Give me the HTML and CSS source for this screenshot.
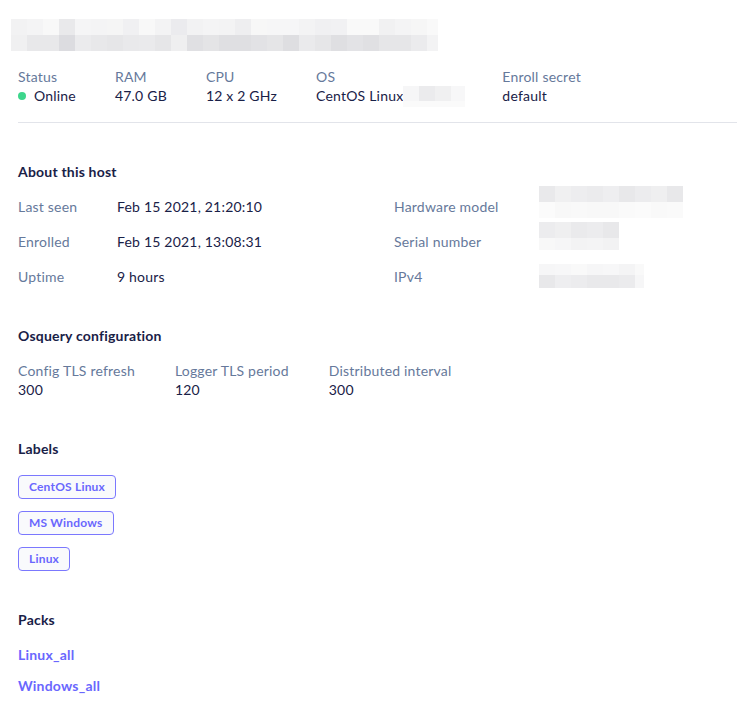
FILE: index.html
```html
<!DOCTYPE html>
<html>
<head>
<meta charset="utf-8">
<link rel="stylesheet" href="styles.css">
</head>
<body>
<div class="page">
  <div class="title-blur">
    <svg width="427" height="32" viewBox="0 0 427 32">
      <g>
        <rect x="0" y="0" width="16" height="16" fill="#f2f2f3"/>
        <rect x="16" y="0" width="16" height="16" fill="#f4f4f5"/>
        <rect x="32" y="0" width="16" height="16" fill="#f8f8f8"/>
        <rect x="48" y="0" width="16" height="16" fill="#e9e9eb"/>
        <rect x="64" y="0" width="16" height="16" fill="#f5f5f6"/>
        <rect x="80" y="0" width="16" height="16" fill="#f4f4f5"/>
        <rect x="96" y="0" width="16" height="16" fill="#f5f5f5"/>
        <rect x="112" y="0" width="16" height="16" fill="#f0f0f2"/>
        <rect x="128" y="0" width="16" height="16" fill="#f8f8f8"/>
        <rect x="144" y="0" width="16" height="16" fill="#f3f3f4"/>
        <rect x="160" y="0" width="16" height="16" fill="#ebebee"/>
        <rect x="176" y="0" width="16" height="16" fill="#f2f2f3"/>
        <rect x="192" y="0" width="16" height="16" fill="#f4f4f5"/>
        <rect x="208" y="0" width="16" height="16" fill="#f3f3f4"/>
        <rect x="224" y="0" width="16" height="16" fill="#eeeef0"/>
        <rect x="240" y="0" width="16" height="16" fill="#f7f7f7"/>
        <rect x="256" y="0" width="16" height="16" fill="#f6f6f7"/>
        <rect x="272" y="0" width="16" height="16" fill="#f6f6f7"/>
        <rect x="288" y="0" width="16" height="16" fill="#f3f3f4"/>
        <rect x="304" y="0" width="16" height="16" fill="#f0f0f2"/>
        <rect x="320" y="0" width="16" height="16" fill="#f1f1f3"/>
        <rect x="336" y="0" width="16" height="16" fill="#f9f9f9"/>
        <rect x="352" y="0" width="16" height="16" fill="#f9f9f9"/>
        <rect x="368" y="0" width="16" height="16" fill="#f1f1f2"/>
        <rect x="384" y="0" width="16" height="16" fill="#f4f4f5"/>
        <rect x="400" y="0" width="16" height="16" fill="#f6f6f6"/>
        <rect x="416" y="0" width="11" height="16" fill="#f9f9f9"/>
      </g>
      <g>
        <rect x="0" y="16" width="16" height="16" fill="#f0f0f1"/>
        <rect x="16" y="16" width="16" height="16" fill="#e8e8ea"/>
        <rect x="32" y="16" width="16" height="16" fill="#e8e8ea"/>
        <rect x="48" y="16" width="16" height="16" fill="#dcdce0"/>
        <rect x="64" y="16" width="16" height="16" fill="#ebebed"/>
        <rect x="80" y="16" width="16" height="16" fill="#e8e8ea"/>
        <rect x="96" y="16" width="16" height="16" fill="#e6e6e8"/>
        <rect x="112" y="16" width="16" height="16" fill="#e9e9eb"/>
        <rect x="128" y="16" width="16" height="16" fill="#eaeaec"/>
        <rect x="144" y="16" width="16" height="16" fill="#e6e6e8"/>
        <rect x="160" y="16" width="16" height="16" fill="#efeff0"/>
        <rect x="176" y="16" width="16" height="16" fill="#e0e0e3"/>
        <rect x="192" y="16" width="16" height="16" fill="#e4e4e6"/>
        <rect x="208" y="16" width="16" height="16" fill="#dfdfe2"/>
        <rect x="224" y="16" width="16" height="16" fill="#dfdfe2"/>
        <rect x="240" y="16" width="16" height="16" fill="#e2e2e5"/>
        <rect x="256" y="16" width="16" height="16" fill="#e5e5e7"/>
        <rect x="272" y="16" width="16" height="16" fill="#dedee1"/>
        <rect x="288" y="16" width="16" height="16" fill="#eaeaec"/>
        <rect x="304" y="16" width="16" height="16" fill="#e6e6e8"/>
        <rect x="320" y="16" width="16" height="16" fill="#dfdfe2"/>
        <rect x="336" y="16" width="16" height="16" fill="#e3e3e6"/>
        <rect x="352" y="16" width="16" height="16" fill="#e0e0e3"/>
        <rect x="368" y="16" width="16" height="16" fill="#e6e6e8"/>
        <rect x="384" y="16" width="16" height="16" fill="#e6e6e8"/>
        <rect x="400" y="16" width="16" height="16" fill="#ebebed"/>
        <rect x="416" y="16" width="11" height="16" fill="#f3f3f4"/>
      </g>
    </svg>
  </div>

  <div class="stats">
    <div class="stat">
      <div class="label">Status</div>
      <div class="value"><span class="dot"></span>Online</div>
    </div>
    <div class="stat">
      <div class="label">RAM</div>
      <div class="value">47.0 GB</div>
    </div>
    <div class="stat">
      <div class="label">CPU</div>
      <div class="value">12 x 2 GHz</div>
    </div>
    <div class="stat">
      <div class="label">OS</div>
      <div class="value os-value">CentOS Linux<svg class="os-blur" width="62" height="21" viewBox="0 0 62 21">
        <rect x="0" y="0" width="16" height="21" fill="#f6f6f7"/>
        <rect x="16" y="0" width="16" height="21" fill="#ebebed"/>
        <rect x="32" y="0" width="16" height="21" fill="#f0f0f1"/>
        <rect x="48" y="0" width="14" height="21" fill="#f7f7f8"/>
        <rect x="0" y="15" width="62" height="6" fill="#fafafa"/>
      </svg></div>
    </div>
    <div class="stat">
      <div class="label">Enroll secret</div>
      <div class="value">default</div>
    </div>
  </div>

  <section class="section first">
    <h2 class="heading">About this host</h2>
    <div class="about">
      <div class="label">Last seen</div>
      <div class="value">Feb 15 2021, 21:20:10</div>
      <div class="label">Hardware model</div>
      <div class="value">
        <svg class="blur blur-hw" width="144" height="32" viewBox="0 0 144 32">
          <rect x="0" y="0" width="16" height="16" fill="#e9e9eb"/>
          <rect x="16" y="0" width="16" height="16" fill="#f0f0f1"/>
          <rect x="32" y="0" width="16" height="16" fill="#ededef"/>
          <rect x="48" y="0" width="16" height="16" fill="#ebebed"/>
          <rect x="64" y="0" width="16" height="16" fill="#eeeef0"/>
          <rect x="80" y="0" width="16" height="16" fill="#e8e8ea"/>
          <rect x="96" y="0" width="16" height="16" fill="#ececee"/>
          <rect x="112" y="0" width="16" height="16" fill="#efeff0"/>
          <rect x="128" y="0" width="16" height="16" fill="#e8e8ea"/>
          <rect x="0" y="16" width="16" height="16" fill="#fbfbfb"/>
          <rect x="16" y="16" width="16" height="16" fill="#f8f8f8"/>
          <rect x="32" y="16" width="16" height="16" fill="#f9f9f9"/>
          <rect x="48" y="16" width="16" height="16" fill="#f8f8f8"/>
          <rect x="64" y="16" width="16" height="16" fill="#f8f8f8"/>
          <rect x="80" y="16" width="16" height="16" fill="#fafafa"/>
          <rect x="96" y="16" width="16" height="16" fill="#fbfbfb"/>
          <rect x="112" y="16" width="16" height="16" fill="#f9f9f9"/>
          <rect x="128" y="16" width="16" height="16" fill="#fafafa"/>
        </svg>
      </div>
      <div class="label">Enrolled</div>
      <div class="value">Feb 15 2021, 13:08:31</div>
      <div class="label">Serial number</div>
      <div class="value">
        <svg class="blur blur-sn" width="80" height="28" viewBox="0 0 80 28">
          <rect x="0" y="0" width="16" height="16" fill="#ececee"/>
          <rect x="16" y="0" width="16" height="16" fill="#efeff0"/>
          <rect x="32" y="0" width="16" height="16" fill="#eaeaec"/>
          <rect x="48" y="0" width="16" height="16" fill="#ececee"/>
          <rect x="64" y="0" width="16" height="16" fill="#e8e8ea"/>
          <rect x="0" y="16" width="16" height="12" fill="#f8f8f8"/>
          <rect x="16" y="16" width="16" height="12" fill="#f6f6f7"/>
          <rect x="32" y="16" width="16" height="12" fill="#f3f3f4"/>
          <rect x="48" y="16" width="16" height="12" fill="#f4f4f5"/>
          <rect x="64" y="16" width="16" height="12" fill="#f2f2f3"/>
        </svg>
      </div>
      <div class="label">Uptime</div>
      <div class="value">9 hours</div>
      <div class="label">IPv4</div>
      <div class="value">
        <svg class="blur blur-ip" width="105" height="24" viewBox="0 0 105 24">
          <rect x="0" y="0" width="16" height="11" fill="#f6f6f7"/>
          <rect x="16" y="0" width="16" height="11" fill="#f7f7f8"/>
          <rect x="32" y="0" width="16" height="11" fill="#f9f9f9"/>
          <rect x="48" y="0" width="16" height="11" fill="#f6f6f7"/>
          <rect x="64" y="0" width="16" height="11" fill="#f7f7f8"/>
          <rect x="80" y="0" width="16" height="11" fill="#f4f4f5"/>
          <rect x="96" y="0" width="9" height="11" fill="#f9f9f9"/>
          <rect x="0" y="11" width="16" height="13" fill="#e8e8ea"/>
          <rect x="16" y="11" width="16" height="13" fill="#eeeef0"/>
          <rect x="32" y="11" width="16" height="13" fill="#ececee"/>
          <rect x="48" y="11" width="16" height="13" fill="#e9e9eb"/>
          <rect x="64" y="11" width="16" height="13" fill="#e9e9eb"/>
          <rect x="80" y="11" width="16" height="13" fill="#ebebed"/>
          <rect x="96" y="11" width="9" height="13" fill="#f6f6f7"/>
        </svg>
      </div>
    </div>
  </section>

  <section class="section">
    <h2 class="heading">Osquery configuration</h2>
    <div class="config">
      <div class="stat">
        <div class="label">Config TLS refresh</div>
        <div class="value">300</div>
      </div>
      <div class="stat">
        <div class="label">Logger TLS period</div>
        <div class="value">120</div>
      </div>
      <div class="stat">
        <div class="label">Distributed interval</div>
        <div class="value">300</div>
      </div>
    </div>
  </section>

  <section class="section">
    <h2 class="heading">Labels</h2>
    <div class="tags">
      <span class="tag">CentOS Linux</span>
      <span class="tag">MS Windows</span>
      <span class="tag">Linux</span>
    </div>
  </section>

  <section class="section packs-section">
    <h2 class="heading">Packs</h2>
    <div class="packs">
      <a class="pack" href="#">Linux_all</a>
      <a class="pack" href="#">Windows_all</a>
    </div>
  </section>
</div>
</body>
</html>
```

FILE: styles.css
```css
* { box-sizing: border-box; }
html, body { margin: 0; padding: 0; background: #ffffff; }
body {
  font-family: "Lato", "Noto Sans", "Liberation Sans", sans-serif;
  font-size: 14px;
  line-height: 19px;
  letter-spacing: 0.2px;
  color: #192147;
}
.page { padding: 19px 0 40px 0; }
.title-blur { margin-left: 11px; height: 32px; }
.title-blur svg { display: block; }

.stats {
  display: flex;
  gap: 39px;
  margin: 16px 0 0 18px;
  padding-bottom: 17px;
  border-bottom: 1px solid #e2e4ea;
}
.label { color: #66799b; }
.value { color: #192147; }
.dot {
  display: inline-block;
  width: 8px;
  height: 8px;
  border-radius: 50%;
  background: #3dd68c;
  margin-right: 8px;
  vertical-align: 1px;
}
.os-value { display: flex; align-items: center; }
.os-blur { display: block; margin: 0 -2px -2px 0; }

.section { margin: 40px 0 0 18px; }
.section.first { margin-top: 39px; }
.section.packs-section { margin-top: 39px; }
.heading {
  margin: 0;
  font-size: 14px;
  line-height: 19px;
  font-weight: 700;
  color: #192147;
}
.about {
  display: grid;
  grid-template-columns: 99px 277px 145px 1fr;
  grid-auto-rows: 19px;
  row-gap: 16px;
  margin-top: 16px;
}
.blur { display: block; }
.blur-hw { margin-top: -11px; }
.blur-sn { margin-top: -10px; }
.blur-ip { margin-top: -3px; }

.config { display: flex; gap: 40px; margin-top: 16px; }

.tags {
  display: flex;
  flex-direction: column;
  align-items: flex-start;
  gap: 12px;
  margin-top: 17px;
}
.tag {
  display: inline-block;
  height: 24px;
  line-height: 22px;
  padding: 0 10px;
  border: 1px solid #7b78fe;
  border-radius: 4px;
  background: #f9fafc;
  color: #6a67fe;
  font-size: 12px;
  font-weight: 700;
}

.packs {
  display: flex;
  flex-direction: column;
  align-items: flex-start;
  gap: 12px;
  margin-top: 16px;
}
.pack {
  color: #6a67fe;
  font-weight: 700;
  text-decoration: none;
}
```
